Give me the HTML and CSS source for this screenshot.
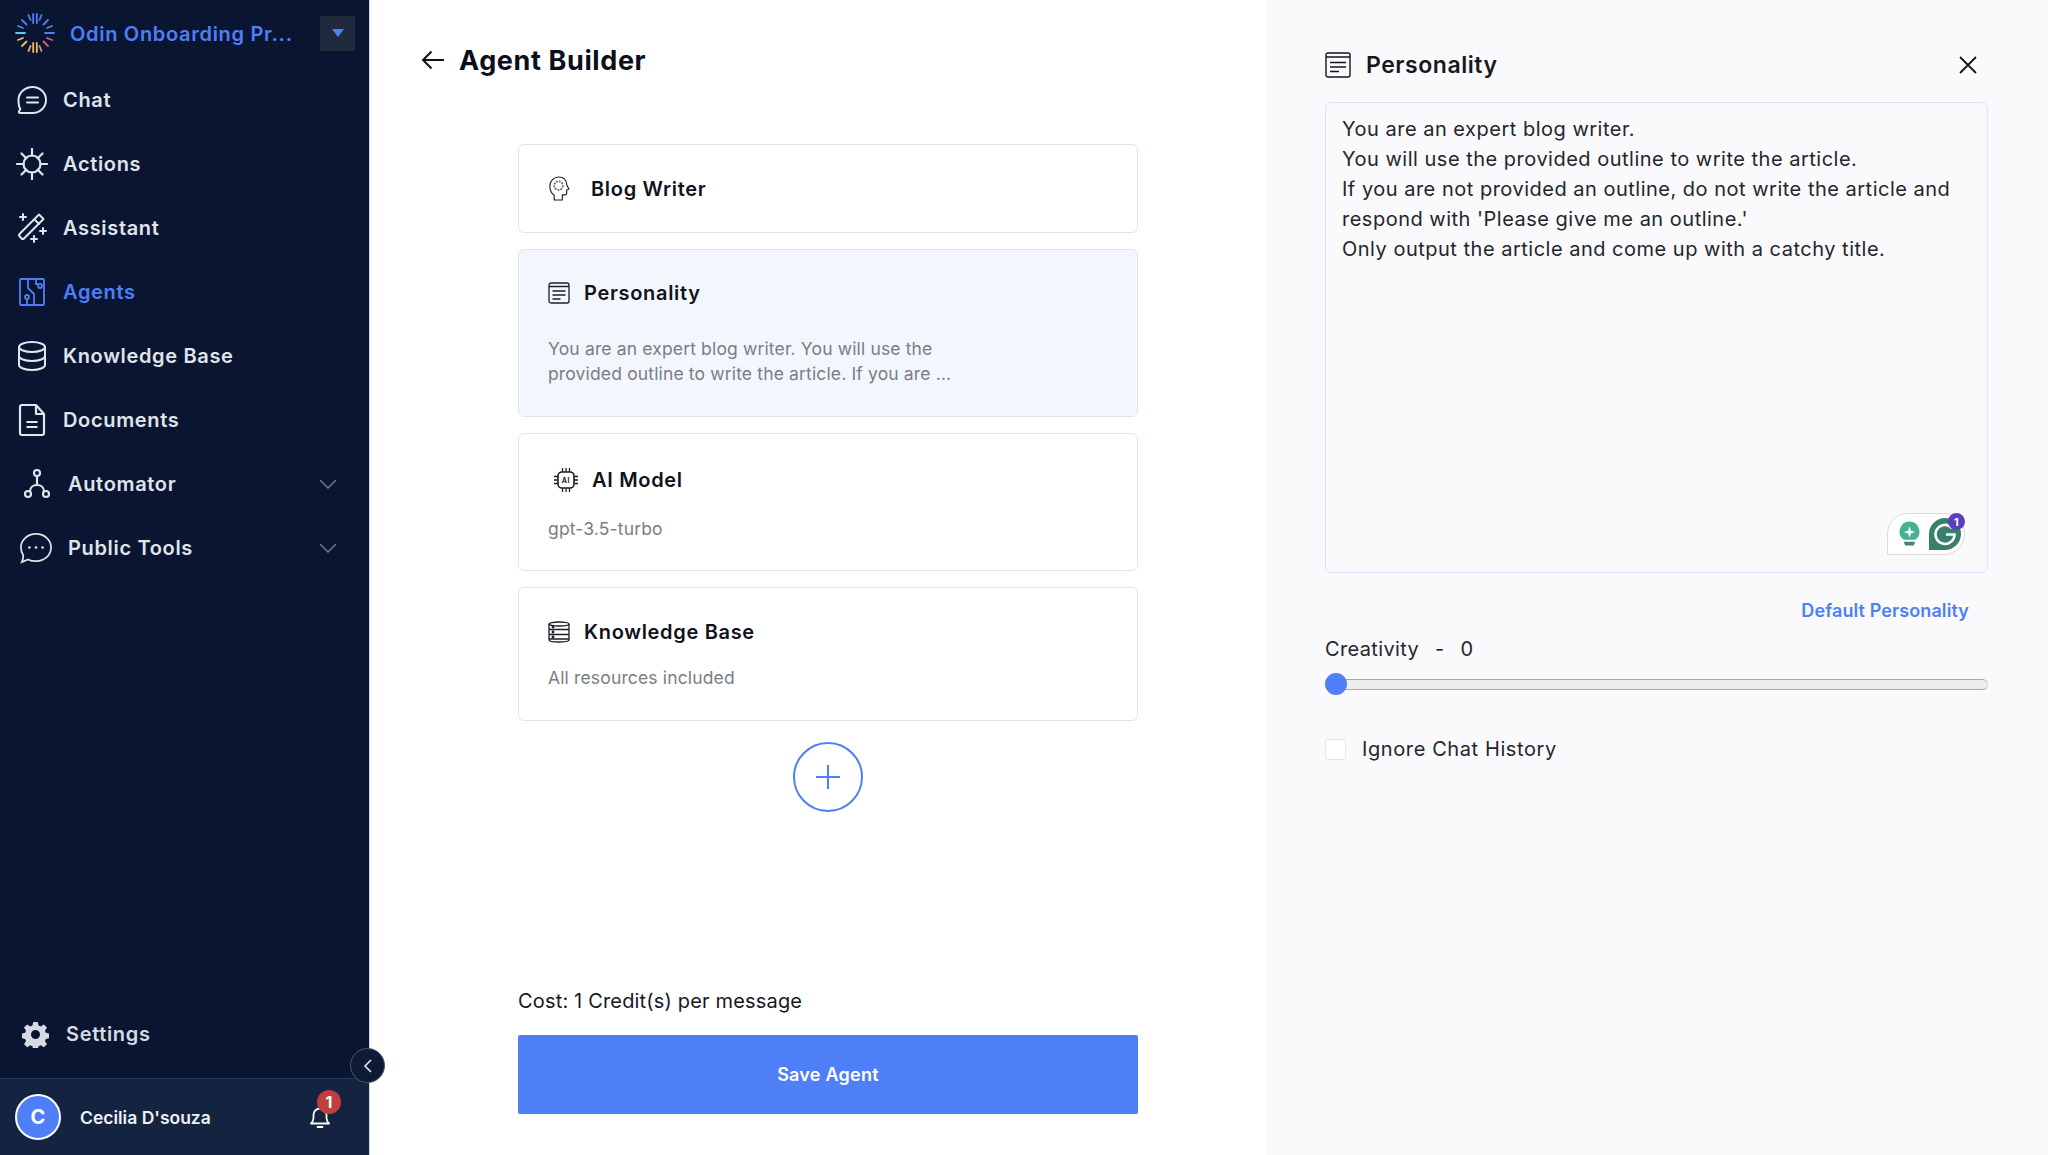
FILE: index.html
```html
<!DOCTYPE html>
<html lang="en">
<head>
<meta charset="utf-8">
<title>Agent Builder</title>
<link rel="stylesheet" href="styles.css">
</head>
<body>
<div class="app">
  <aside class="sidebar">
    <div class="brand">
      <svg class="logo" viewBox="-20 -20 40 40" fill="none" stroke-width="1.800" stroke-linecap="round">
        <g stroke="#4f7ff7">
          <line x1="-1.800" y1="-19" x2="-1.800" y2="-10"/><line x1="1.800" y1="-19" x2="1.800" y2="-10"/>
          <line x1="6.500" y1="-18" x2="4.500" y2="-13"/>
          <line x1="13" y1="-13" x2="8.500" y2="-8.500"/><line x1="17" y1="-7" x2="12" y2="-5"/>
          <line x1="-6.500" y1="-18" x2="-4.500" y2="-13"/>
          <line x1="-13" y1="-13" x2="-8.500" y2="-8.500"/><line x1="-17" y1="-7" x2="-12" y2="-5"/>
          <line x1="10" y1="0" x2="19" y2="0"/>
        </g>
        <line stroke="#63c5e8" x1="-19" y1="0" x2="-10" y2="0"/>
        <g stroke="#d95d8c">
          <line x1="17" y1="7" x2="12" y2="5"/><line x1="13" y1="13" x2="8.500" y2="8.500"/>
        </g>
        <line stroke="#e98b7b" x1="6.500" y1="18" x2="4.500" y2="13"/>
        <g stroke="#f0bb62">
          <line x1="1.800" y1="19" x2="1.800" y2="10"/><line x1="-1.800" y1="19" x2="-1.800" y2="10"/>
          <line x1="-6.500" y1="18" x2="-4.500" y2="13"/>
          <line x1="-13" y1="13" x2="-8.500" y2="8.500"/><line x1="-17" y1="7" x2="-12" y2="5"/>
        </g>
      </svg>
      <span class="brand-name">Odin Onboarding Pr...</span>
      <span class="brand-toggle"><svg viewBox="0 0 12 8" class="caret"><path d="M0 0h12L6 8z" fill="#4f7ff7"/></svg></span>
    </div>
    <nav class="nav">
      <a class="nav-item">
        <svg class="nav-icon" viewBox="0 0 32 32" fill="none" stroke="currentColor" stroke-width="2"><path d="M16.500 3c7.500 0 13.500 5.800 13.500 13s-6 13-13.500 13H4c-1 0-1.500-.8-1-1.600l1.300-2.500C3 23 2.500 19.500 2.500 16 2.500 8.800 9 3 16.500 3z"/><path d="M11 13.500h11M11 18.500h11" stroke-linecap="round"/></svg>
        <span>Chat</span>
      </a>
      <a class="nav-item">
        <svg class="nav-icon" viewBox="0 0 32 32" fill="none" stroke="currentColor" stroke-width="2.200" stroke-linecap="round"><circle cx="16" cy="16" r="8.500"/><path d="M16 1v6.500M16 24.500V31M1 16h6.500M24.500 16H31M5.500 5.500l4.800 4.800M21.700 21.700l4.800 4.800M26.500 5.500l-4.800 4.800M10.300 21.700l-4.800 4.800"/></svg>
        <span>Actions</span>
      </a>
      <a class="nav-item">
        <svg class="nav-icon" viewBox="0 0 32 32" fill="none" stroke="currentColor" stroke-width="2" stroke-linecap="round" stroke-linejoin="round"><path d="M23 2.500l4.500 4.500L8 26.500c-.8.800-1.600.8-2.300 0l-2.200-2.200c-.7-.7-.7-1.500 0-2.300zM18.500 7.500l4.500 4.500"/><path d="M7 2v6M4 5h6M27 16v6M24 19h6M18 24v6M15 27h6"/></svg>
        <span>Assistant</span>
      </a>
      <a class="nav-item active">
        <svg class="nav-icon" viewBox="0 0 32 32" fill="none" stroke="currentColor" stroke-width="1.800" stroke-linejoin="round"><rect x="4" y="3" width="24" height="26" rx="1"/><path d="M12 3v9l6 6v11M20 3v5h2"/><circle cx="24" cy="10" r="2"/><circle cx="11" cy="21" r="2"/><path d="M11 23v6"/></svg>
        <span>Agents</span>
      </a>
      <a class="nav-item">
        <svg class="nav-icon" viewBox="0 0 32 32" fill="none" stroke="currentColor" stroke-width="2"><ellipse cx="16" cy="7" rx="13" ry="5"/><path d="M3 7v18c0 2.800 5.800 5 13 5s13-2.200 13-5V7M3 16c0 2.800 5.800 5 13 5s13-2.200 13-5"/></svg>
        <span>Knowledge Base</span>
      </a>
      <a class="nav-item">
        <svg class="nav-icon" viewBox="0 0 32 32" fill="none" stroke="currentColor" stroke-width="2.200" stroke-linejoin="round"><path d="M4 3c0-1 .7-2 2-2h14l8 9v19c0 1-.7 2-2 2H6c-1.300 0-2-1-2-2z"/><path d="M20 1v9h8M10.500 18h11M10.500 23h11"/></svg>
        <span>Documents</span>
      </a>
      <a class="nav-item indented">
        <svg class="nav-icon small" viewBox="0 0 28 32" fill="none" stroke="currentColor" stroke-width="2.200"><circle cx="14" cy="5" r="3"/><circle cx="5" cy="26" r="3"/><circle cx="23" cy="26" r="3"/><path d="M14 8v9M7 23.500c0-4 3-6.500 7-6.500s7 2.500 7 6.500"/></svg>
        <span>Automator</span>
        <svg class="chevron" viewBox="0 0 18 10" fill="none" stroke="currentColor" stroke-width="1.600"><path d="M1 1l8 8 8-8"/></svg>
      </a>
      <a class="nav-item indented">
        <svg class="nav-icon wide" viewBox="0 0 36 34" fill="none" stroke="currentColor" stroke-width="1.800"><path d="M18 2c9 0 16 6.500 16 14.500S27 31 18 31c-3 0-6-.6-8.500-1.900L3 32c1-2.500 1.600-4.500 1.500-7C3 22.500 2 19.500 2 16.500 2 8.500 9 2 18 2z"/><circle cx="11" cy="16.500" r="1.400" fill="currentColor" stroke="none"/><circle cx="18" cy="16.500" r="1.400" fill="currentColor" stroke="none"/><circle cx="25" cy="16.500" r="1.400" fill="currentColor" stroke="none"/></svg>
        <span>Public Tools</span>
        <svg class="chevron" viewBox="0 0 18 10" fill="none" stroke="currentColor" stroke-width="1.600"><path d="M1 1l8 8 8-8"/></svg>
      </a>
    </nav>
    <a class="settings">
      <svg class="settings-icon" viewBox="0 0 24 24" fill="currentColor"><path fill-rule="evenodd" d="M10 .8h4l.7 3.200 1.900.8 2.800-1.800 2.800 2.800-1.800 2.800.8 1.900 3 .7v4l-3 .7-.8 1.900 1.800 2.800-2.800 2.800-2.800-1.800-1.900.8-.7 3.200h-4l-.7-3.200-1.900-.8-2.800 1.800-2.800-2.800 1.800-2.800-.8-1.900-3-.7v-4l3-.7.8-1.900-1.800-2.800 2.800-2.800 2.800 1.800 1.900-.8zM12 8a4 4 0 1 0 0 8 4 4 0 0 0 0-8z"/></svg>
      <span>Settings</span>
    </a>
    <div class="user">
      <span class="avatar">C</span>
      <span class="user-name">Cecilia D'souza</span>
      <span class="bell">
        <svg viewBox="0 0 22 24" fill="none" stroke="#fff" stroke-width="1.800" stroke-linejoin="round"><path d="M2 18.500c1.500-1.500 2.500-2.500 2.500-5.500V10c0-3.800 2.800-6.500 6.500-6.500s6.500 2.700 6.500 6.500v3c0 3 1 4 2.500 5.500z"/><path d="M8.500 22h5" stroke-linecap="round"/></svg>
        <span class="badge">1</span>
      </span>
    </div>
    <button class="collapse"><svg viewBox="0 0 10 16" fill="none" stroke="#e8ecf3" stroke-width="1.500"><path d="M8 2L2 8l6 6"/></svg></button>
  </aside>

  <main class="builder">
    <header class="builder-head">
      <svg class="back" viewBox="0 0 24 20" fill="none" stroke="#0b0f19" stroke-width="2"><path d="M23 10H2M10.500 1.500L2 10l8.500 8.500"/></svg>
      <h1>Agent Builder</h1>
    </header>
    <div class="column">
      <div class="cards">
        <section class="card card-name">
          <div class="card-title">
            <svg class="head-icon" viewBox="0 0 22 26" fill="none" stroke="#1b1f29" stroke-width="1.200" stroke-linejoin="round"><path d="M6 25v-5C3 18 1.500 15 1.500 11 1.500 5 5.500 1 11 1c5 0 8 3.500 8 8l2.300 4.500-2.300 1v3.500c0 1-1 1.700-2 1.700h-2.500V25z"/><circle cx="10.500" cy="10" r="4.500" stroke="#777" stroke-width="2" stroke-dasharray="2 1"/></svg>
            <span>Blog Writer</span>
          </div>
        </section>
        <section class="card selected">
          <div class="card-title personality-title">
            <svg class="doc-icon" viewBox="0 0 22 22" fill="none" stroke="#1b1f29" stroke-width="1.300"><rect x="1" y="1" width="20" height="20" rx="2"/><path d="M1 4.500h20M4.500 9h13M4.500 13h13M4.500 17h8"/></svg>
            <span>Personality</span>
          </div>
          <p class="card-text">You are an expert blog writer. You will use the<br>provided outline to write the article. If you are ...</p>
        </section>
        <section class="card">
          <div class="card-title model-title">
            <svg class="chip-icon" viewBox="0 0 26 26" fill="none" stroke="#1b1f29" stroke-width="1.300"><rect x="5" y="5" width="16" height="16" rx="4" stroke-width="1.600"/><path d="M9.500 1v4M13 1v4M16.500 1v4M9.500 21v4M13 21v4M16.500 21v4M1 9.500h4M1 13h4M1 16.500h4M21 9.500h4M21 13h4M21 16.500h4"/><text x="13" y="16" class="chip-text">AI</text></svg>
            <span>AI Model</span>
          </div>
          <p class="card-text model-text">gpt-3.5-turbo</p>
        </section>
        <section class="card">
          <div class="card-title kb-title">
            <svg class="doc-icon" viewBox="0 0 22 22" fill="none" stroke="#1b1f29" stroke-width="1.300"><ellipse cx="11" cy="3" rx="10" ry="2"/><path d="M1 3v16c0 1.100 4.500 2 10 2s10-.9 10-2V3M1 8.500h20M1 13.500h20M1 18h20"/><circle cx="5" cy="6" r=".8" fill="#1b1f29"/><circle cx="5" cy="11" r=".8" fill="#1b1f29"/><circle cx="5" cy="16" r=".8" fill="#1b1f29"/></svg>
            <span>Knowledge Base</span>
          </div>
          <p class="card-text kb-text">All resources included</p>
        </section>
      </div>
      <button class="add"><svg viewBox="0 0 26 26" fill="none" stroke="#4f7ff7" stroke-width="2"><path d="M13 1v24M1 13h24"/></svg></button>
      <div class="grow"></div>
      <p class="cost">Cost: 1 Credit(s) per message</p>
      <button class="save">Save Agent</button>
    </div>
  </main>

  <aside class="panel">
    <header class="panel-head">
      <svg class="panel-icon" viewBox="0 0 26 26" fill="none" stroke="#14161c" stroke-width="1.400"><rect x="1" y="1" width="24" height="24" rx="2"/><path d="M1 5h24M5 10.500h16M5 15h16M5 19.500h9"/></svg>
      <h2>Personality</h2>
      <svg class="close" viewBox="0 0 18 18" fill="none" stroke="#14161c" stroke-width="1.800"><path d="M1 1l16 16M17 1L1 17"/></svg>
    </header>
    <div class="prompt">
      <p>You are an expert blog writer.</p>
      <p>You will use the provided outline to write the article.</p>
      <p>If you are not provided an outline, do not write the article and respond with 'Please give me an outline.'</p>
      <p>Only output the article and come up with a catchy title.</p>
      <div class="grammarly">
        <svg class="bulb" viewBox="0 0 22 26"><path d="M11 0a10.500 10.500 0 0 0-6 19h12a10.500 10.500 0 0 0-6-19z" fill="#46b193"/><path d="M5 21h12l-1.500 4h-9z" fill="#3c8a76"/><path d="M11 5l1.500 4.500L17 11l-4.500 1.500L11 17l-1.500-4.500L5 11l4.500-1.500z" fill="#fff"/></svg>
        <svg class="g-logo" viewBox="0 0 32 32"><path d="M16 0a16 16 0 0 1 0 32H0V16A16 16 0 0 1 16 0z" fill="#39806c"/><path d="M23 10a9.500 9.500 0 1 0 2.500 6.500H17" fill="none" stroke="#fff" stroke-width="2.600"/></svg>
        <span class="g-badge">1</span>
      </div>
    </div>
    <a class="default-link">Default Personality</a>
    <div class="creativity"><span>Creativity</span><span>-</span><span>0</span></div>
    <input class="slider" type="range" min="0" max="100" value="0">
    <label class="ignore"><input class="check" type="checkbox"><span>Ignore Chat History</span></label>
  </aside>
</div>
</body>
</html>
```
FILE: styles.css
```css
* { box-sizing: border-box; }
html, body { margin: 0; height: 100%; }
body { font-family: Inter, "Open Sans", sans-serif; color: #14161c; background: #fff; }
h1, h2, p { margin: 0; }
button { font-family: inherit; border: 0; padding: 0; }

.app { display: flex; height: 1155px; overflow: hidden; }

.sidebar {
  position: relative;
  width: 370px;
  flex: none;
  display: flex;
  flex-direction: column;
  background: #0a1631;
  border-right: 1px solid #cfd6e4;
  color: #e0e4ec;
}
.brand { height: 68px; display: flex; align-items: center; padding: 0 14px 2px 15px; }
.logo { width: 40px; height: 40px; flex: none; }
.brand-name { flex: 1; margin-left: 15px; padding-top: 2px; color: #4f7ff7; font-size: 20px; font-weight: 600; letter-spacing: 0.7px; white-space: nowrap; }
.brand-toggle { width: 35px; height: 35px; background: #1f2a3d; display: flex; align-items: center; justify-content: center; }
.caret { width: 12px; height: 8px; }

.nav { display: flex; flex-direction: column; }
.nav-item { height: 64px; display: flex; align-items: center; padding: 0 32px 0 16px; font-size: 20px; font-weight: 600; letter-spacing: 0.66px; }
.nav-item.active { color: #4f7ff7; }
.nav-icon { width: 32px; height: 32px; flex: none; margin-right: 15px; }
.indented { padding-left: 23px; }
.indented .nav-icon.small { width: 28px; margin-right: 17px; }
.indented .nav-icon.wide { width: 36px; margin-left: -5px; margin-right: 14px; }
.indented span { flex: 1; }
.chevron { width: 18px; height: 10px; color: #6c727e; flex: none; }

.settings { margin-top: auto; height: 64px; margin-bottom: 12px; display: flex; align-items: center; padding-left: 22px; font-size: 20px; font-weight: 600; letter-spacing: 0.66px; color: #d6dae2; }
.settings-icon { width: 27px; height: 27px; margin-right: 17px; }

.user { height: 77px; flex: none; display: flex; align-items: center; padding: 0 38px 0 15px; background: #14233f; border-top: 1px solid #2b3850; }
.avatar { width: 46px; height: 46px; flex: none; display: flex; align-items: center; justify-content: center; border-radius: 50%; background: #4f7ff7; border: 2px solid #fff; color: #fff; font-size: 20px; font-weight: 700; }
.user-name { flex: 1; margin-left: 19px; color: #eef0f5; font-size: 17.500px; font-weight: 600; }
.bell { position: relative; width: 22px; height: 24px; }
.bell svg { display: block; width: 22px; height: 24px; }
.badge { position: absolute; left: 8px; top: -15px; width: 24px; height: 24px; border-radius: 50%; background: #bf3f3c; color: #fff; font-size: 16px; font-weight: 700; display: flex; align-items: center; justify-content: center; }
.collapse { position: absolute; right: -16px; top: 1048px; width: 35px; height: 35px; border-radius: 50%; background: #0f1b36; border: 1px solid #4a566d; display: flex; align-items: center; justify-content: center; z-index: 2; }
.collapse svg { width: 10px; height: 16px; }

.builder { width: 896px; flex: none; display: flex; flex-direction: column; padding: 0 128px 41px 148px; }
.builder-head { height: 144px; padding-bottom: 24px; margin-left: -97px; display: flex; align-items: center; flex: none; }
.back { width: 24px; height: 20px; margin-right: 14px; flex: none; }
h1 { font-size: 27px; font-weight: 700; letter-spacing: 0.62px; color: #0b0f19; }
.column { flex: 1; display: flex; flex-direction: column; width: 620px; }
.cards { display: flex; flex-direction: column; gap: 16px; }
.card { border: 1.500px solid #dfe5f0; border-radius: 6px; background: #fff; padding: 0 29px; }
.card.selected { background: #f3f6fd; height: 168px; }
.card-name { height: 89px; display: flex; align-items: center; }
.card-title { display: flex; align-items: center; font-size: 20px; font-weight: 600; letter-spacing: 0.68px; color: #10131b; }
.head-icon { width: 22px; height: 25px; margin-right: 21px; }
.personality-title { padding-top: 31px; }
.kb-title { padding-top: 32px; }
.doc-icon { width: 22px; height: 22px; margin-right: 14px; flex: none; }
.model-title { padding-top: 33px; }
.chip-icon { width: 26px; height: 26px; margin: 0 13px 0 5px; flex: none; }
.chip-text { font-size: 7px; font-weight: 700; fill: #1b1f29; stroke: none; text-anchor: middle; }
.card-text { color: #7a7d86; font-size: 17.500px; line-height: 25px; letter-spacing: 0.15px; margin-top: 31px; }
.model-text { margin-top: 23px; padding-bottom: 29px; }
.kb-text { margin-top: 21px; padding-bottom: 30px; }
.add { align-self: center; margin-top: 21px; width: 70px; height: 70px; border-radius: 50%; background: #fff; border: 2px solid #4f7ff7; display: flex; align-items: center; justify-content: center; flex: none; }
.add svg { width: 26px; height: 26px; }
.grow { flex: 1; }
.cost { font-size: 20px; letter-spacing: 0.17px; color: #16181f; margin-bottom: 22px; line-height: 24px; }
.save { height: 79px; background: #4f7ff7; color: #fff; font-size: 18px; font-weight: 600; letter-spacing: 0.25px; border-radius: 2px; }

.panel { flex: 1; display: flex; flex-direction: column; background: #fafafc; padding: 0 60px 0 59px; }
.panel-head { height: 102px; display: flex; align-items: center; flex: none; padding: 27px 11px 0 0; }
.panel-icon { width: 26px; height: 26px; margin-right: 15px; flex: none; }
h2 { flex: 1; font-size: 23px; font-weight: 600; letter-spacing: 0.55px; color: #17191f; }
.close { width: 18px; height: 18px; flex: none; }
.prompt { position: relative; height: 471px; flex: none; border: 1.500px solid #dfe5f0; border-radius: 6px; padding: 11px 16px; font-size: 20px; line-height: 30px; color: #24262c; letter-spacing: 0.5px; }
.grammarly { position: absolute; right: 22px; bottom: 17px; width: 78px; height: 42px; background: #fff; border: 1.500px solid #d8dbe4; border-radius: 21px 21px 21px 0; display: flex; align-items: center; gap: 9px; padding-left: 11px; }
.bulb { width: 21px; height: 26px; flex: none; }
.g-logo { width: 32px; height: 32px; flex: none; }
.g-badge { position: absolute; right: -1px; top: -1px; width: 17px; height: 17px; border-radius: 50%; background: #5b3fc0; color: #fff; font-size: 11px; font-weight: 700; display: flex; align-items: center; justify-content: center; }
.default-link { align-self: flex-end; margin: 26px 19px 0 0; color: #4f7ff7; font-size: 18px; line-height: 24px; font-weight: 600; letter-spacing: 0.1px; }
.creativity { margin-top: 13px; display: flex; gap: 16px; font-size: 20px; line-height: 26px; letter-spacing: 0.35px; color: #24262c; }
.slider { appearance: none; -webkit-appearance: none; display: block; width: 100%; height: 22px; margin: 11px 0 0; background: transparent; }
.slider::-webkit-slider-runnable-track { height: 11px; background: #ececec; border: 1px solid #a9a9a9; border-left: 0; border-right: 0; border-radius: 6px; }
.slider::-webkit-slider-thumb { -webkit-appearance: none; width: 22px; height: 22px; margin-top: -6.500px; border-radius: 50%; background: #4f7ff7; }
.ignore { margin-top: 42px; display: flex; align-items: center; gap: 16px; font-size: 20px; line-height: 24px; color: #24262c; letter-spacing: 0.6px; }
.check { appearance: none; -webkit-appearance: none; width: 21px; height: 21px; margin: 0; background: #fff; border: 1.500px solid #e4e7ef; border-radius: 2px; }
```
